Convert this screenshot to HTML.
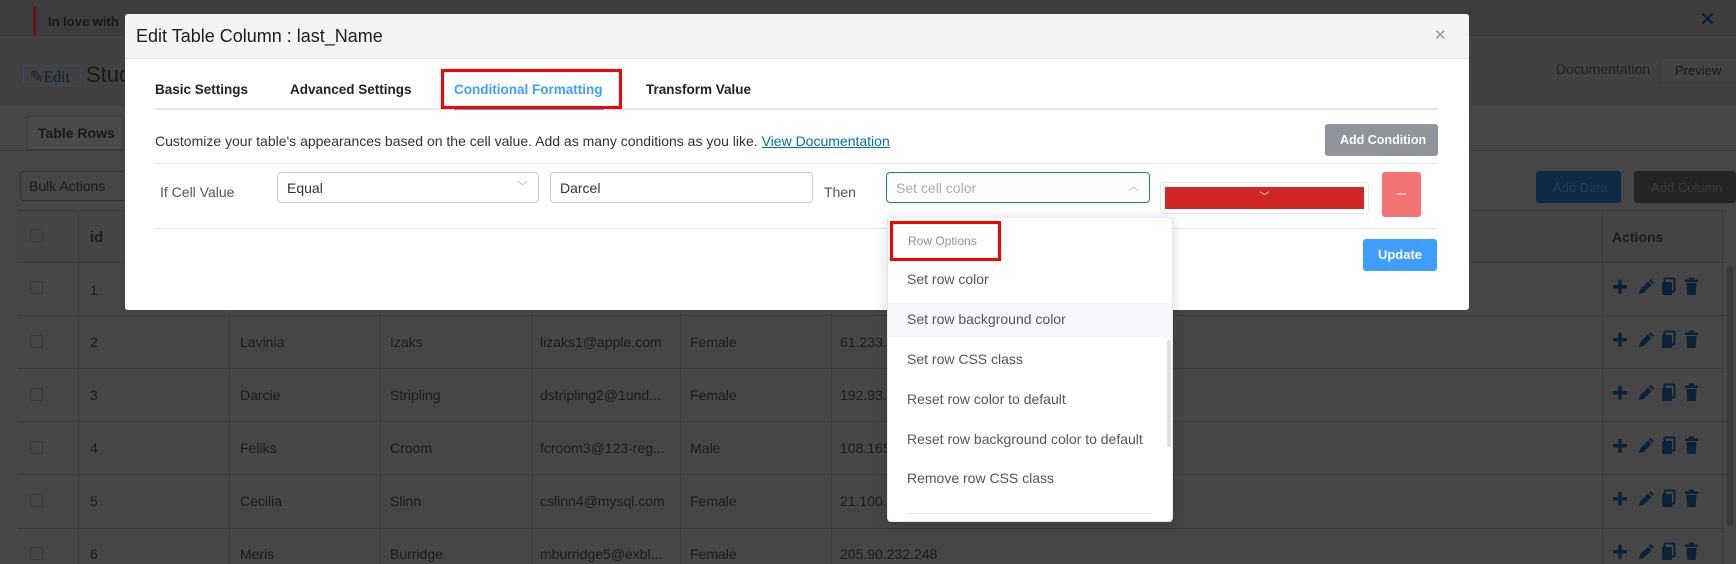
<!DOCTYPE html>
<html><head><meta charset="utf-8"><style>
*{box-sizing:border-box;margin:0;padding:0}
body{width:1736px;height:564px;overflow:hidden;background:#464646;font-family:"Liberation Sans",Arial,sans-serif;position:relative;color:#1e1e1e}
.a{position:absolute}
.t{position:absolute;font-size:14px;color:#1c1c1c;white-space:nowrap}
.hl{position:absolute;left:18px;right:10px;height:1px;background:#3c3c3c}
.vl{position:absolute;top:210px;bottom:0;width:1px;background:#3c3c3c}
.cb{position:absolute;left:30px;width:13px;height:13px;border:1px solid #3a3a3a;border-radius:2px}
.ic{position:absolute;left:1613px}
.m{position:absolute;left:125px;top:14px;width:1344px;height:296px;background:#fff;border-radius:3px}
.sel{position:absolute;border:1px solid #c8cbd1;border-radius:4px;height:31px;font-size:14px;color:#333;padding:7px 9px}
.dd{position:absolute;left:887px;top:217px;width:286px;height:305px;background:#fff;border:1px solid #e4e7ed;border-radius:4px;box-shadow:0 2px 12px rgba(0,0,0,.15)}
.it{position:absolute;left:19px;font-size:14px;color:#555}
.tab{position:absolute;top:68px;font-size:13.5px;font-weight:bold;color:#222;white-space:nowrap}
</style></head><body>
<svg width="0" height="0" style="position:absolute">
<defs>
<g id="icons" fill="#0c2238">
<rect x="0" y="8" width="14" height="3.5"/><rect x="5.25" y="2.7" width="3.5" height="14"/>
<path d="M26 17 L27 12.5 L35 4.5 L38.5 8 L30.5 16 Z M36 3.5 L37.5 2 L41 5.5 L39.5 7 Z"/>
<rect x="49" y="5" width="10" height="13" rx="1"/><rect x="51.5" y="1.5" width="10" height="13" rx="1" fill="none" stroke="#0c2238" stroke-width="2"/>
<rect x="72" y="2.5" width="13" height="2.5"/><rect x="76" y="0.5" width="5" height="3"/><path d="M73.5 6 H83.5 L82.7 18 H74.3 Z"/>
</g></defs></svg>
<!-- background page -->
<div class="a" style="left:0;top:0;width:1736px;height:36px;background:#3d3d3d;border-bottom:1px solid #383838"></div>
<div class="a" style="left:33px;top:6px;width:3px;height:29px;background:#6b1515"></div>
<div class="t" style="left:48px;top:14px;font-size:13px;font-weight:bold;color:#1a1a1a">In love with</div>
<div class="t" style="left:1700px;top:9px;font-size:18px;font-weight:bold;color:#0c2238">✕</div>
<div class="a" style="left:0;top:36px;width:1736px;height:70px;background:#414141"></div>
<div class="a" style="left:23px;top:65px;width:58px;height:21px;border:1px solid #3a4a5a;border-radius:2px"></div>
<div class="t" style="left:30px;top:67px;font-family:'Liberation Serif',serif;font-size:16px;color:#0c2238">✎Edit</div>
<div class="t" style="left:86px;top:62px;font-size:22px;color:#1a1a1a">Stud</div>
<div class="t" style="left:1556px;top:61px;font-size:14px;color:#222">Documentation</div>
<div class="a" style="left:1660px;top:57px;width:80px;height:26px;border:1px solid #3c3c3c;background:#434343"></div>
<div class="t" style="left:1675px;top:63px;font-size:13px;color:#1a1a1a">Preview</div>
<div class="a" style="left:27px;top:116px;width:96px;height:34px;background:#4a4a4a;border:1px solid #3c3c3c"></div>
<div class="t" style="left:38px;top:125px;font-weight:bold;color:#1a1a1a">Table Rows</div>
<div class="a" style="left:0;top:150px;width:1736px;height:1px;background:#3c3c3c"></div>
<div class="a" style="left:20px;top:171px;width:110px;height:30px;border:1px solid #333;border-radius:3px"></div>
<div class="t" style="left:29px;top:178px">Bulk Actions</div>
<div class="a" style="left:1536px;top:171px;width:85px;height:32px;background:#0f2a47;border-radius:3px"></div>
<div class="t" style="left:1553px;top:180px;font-size:13px;color:#2a3b4e">Add Data</div>
<div class="a" style="left:1634px;top:171px;width:102px;height:32px;background:#242424;border-radius:3px"></div>
<div class="t" style="left:1651px;top:180px;font-size:13px;color:#3a3a3a">Add Column</div>
<div class="a" style="left:18px;top:210px;width:1708px;height:52px;background:#454545"></div>
<div class="hl" style="top:210px"></div><div class="hl" style="top:262px"></div><div class="hl" style="top:315px"></div><div class="hl" style="top:368px"></div><div class="hl" style="top:421px"></div><div class="hl" style="top:474px"></div><div class="hl" style="top:528px"></div>
<div class="vl" style="left:78px"></div><div class="vl" style="left:229px"></div><div class="vl" style="left:380px"></div><div class="vl" style="left:532px"></div><div class="vl" style="left:680px"></div><div class="vl" style="left:831px"></div><div class="vl" style="left:1602px"></div><div class="vl" style="left:1722px"></div>
<div class="a" style="left:1727px;top:266px;width:6px;height:260px;background:#3a3a3a;border-radius:3px"></div>
<div class="cb" style="top:229px"></div>
<div class="t" style="left:90px;top:229px;font-weight:bold;font-size:15px">id</div>
<div class="t" style="left:1612px;top:229px;font-weight:bold">Actions</div>
<div class="cb" style="top:281px"></div><div class="t" style="left:90px;top:282px">1</div>
<div class="cb" style="top:335px"></div><div class="t" style="left:90px;top:334px">2</div><div class="t" style="left:240px;top:334px">Lavinia</div><div class="t" style="left:390px;top:334px">Izaks</div><div class="t" style="left:540px;top:334px">lizaks1@apple.com</div><div class="t" style="left:690px;top:334px">Female</div><div class="t" style="left:840px;top:334px">61.233.</div>
<div class="cb" style="top:388px"></div><div class="t" style="left:90px;top:387px">3</div><div class="t" style="left:240px;top:387px">Darcie</div><div class="t" style="left:390px;top:387px">Stripling</div><div class="t" style="left:540px;top:387px">dstripling2@1und...</div><div class="t" style="left:690px;top:387px">Female</div><div class="t" style="left:840px;top:387px">192.93.</div>
<div class="cb" style="top:441px"></div><div class="t" style="left:90px;top:440px">4</div><div class="t" style="left:240px;top:440px">Feliks</div><div class="t" style="left:390px;top:440px">Croom</div><div class="t" style="left:540px;top:440px">fcroom3@123-reg...</div><div class="t" style="left:690px;top:440px">Male</div><div class="t" style="left:840px;top:440px">108.165</div>
<div class="cb" style="top:494px"></div><div class="t" style="left:90px;top:493px">5</div><div class="t" style="left:240px;top:493px">Cecilia</div><div class="t" style="left:390px;top:493px">Slinn</div><div class="t" style="left:540px;top:493px">cslinn4@mysql.com</div><div class="t" style="left:690px;top:493px">Female</div><div class="t" style="left:840px;top:493px">21.100.</div>
<div class="cb" style="top:547px"></div><div class="t" style="left:90px;top:546px">6</div><div class="t" style="left:240px;top:546px">Meris</div><div class="t" style="left:390px;top:546px">Burridge</div><div class="t" style="left:540px;top:546px">mburridge5@exbl...</div><div class="t" style="left:690px;top:546px">Female</div><div class="t" style="left:840px;top:546px">205.90.232.248</div>
<svg class="ic" style="top:277px" width="90" height="20"><use href="#icons"/></svg>
<svg class="ic" style="top:330px" width="90" height="20"><use href="#icons"/></svg>
<svg class="ic" style="top:383px" width="90" height="20"><use href="#icons"/></svg>
<svg class="ic" style="top:436px" width="90" height="20"><use href="#icons"/></svg>
<svg class="ic" style="top:489px" width="90" height="20"><use href="#icons"/></svg>
<svg class="ic" style="top:542px" width="90" height="20"><use href="#icons"/></svg>

<!-- modal -->
<div class="m">
 <div class="a" style="left:0;top:0;width:1344px;height:45px;background:#f4f4f4;border-bottom:1px solid #e2e2e2;border-radius:3px 3px 0 0"></div>
 <div class="t" style="left:11px;top:12px;font-size:18px;color:#1e1e1e">Edit Table Column : last_Name</div>
 <div class="t" style="left:1309px;top:12px;font-size:15px;color:#999">✕</div>
 <div class="tab" style="left:30px">Basic Settings</div>
 <div class="tab" style="left:165px">Advanced Settings</div>
 <div class="tab" style="left:329px;color:#409eff">Conditional Formatting</div>
 <div class="tab" style="left:521px">Transform Value</div>
 <div class="a" style="left:30px;top:94px;width:1283px;height:2px;background:#e4e7ed"></div>
 <div class="a" style="left:329px;top:94px;width:150px;height:2px;background:#409eff"></div>
 <div class="a" style="left:316px;top:55px;width:181px;height:40px;border:3px solid #f00"></div>
 <div class="t" style="left:30px;top:119px;font-size:14px;color:#333">Customize your table's appearances based on the cell value. Add as many conditions as you like. <span style="color:#0073aa;text-decoration:underline">View Documentation</span></div>
 <div class="a" style="left:1200px;top:110px;width:113px;height:32px;background:#909399;border-radius:3px"></div>
 <div class="t" style="left:1215px;top:119px;font-size:12.5px;font-weight:bold;color:#fff">Add Condition</div>
 <div class="a" style="left:30px;top:149px;width:1283px;height:1px;background:#e4e7ed"></div>
 <div class="t" style="left:35px;top:170px;color:#555">If Cell Value</div>
 <div class="sel" style="left:152px;top:158px;width:262px">Equal<span style="position:absolute;right:10px;top:5px;color:#bbb;font-size:11px">﹀</span></div>
 <div class="sel" style="left:425px;top:158px;width:263px">Darcel</div>
 <div class="t" style="left:699px;top:170px;color:#555">Then</div>
 <div class="sel" style="left:761px;top:158px;width:264px;border-color:#1e78d0;color:#aaa">Set cell color<span style="position:absolute;right:10px;top:5px;color:#bbb;font-size:11px">︿</span></div>
 <div class="a" style="left:1035px;top:168px;width:209px;height:32px;border:1px solid #e4e7ed;border-radius:3px;background:#fff"></div>
 <div class="a" style="left:1040px;top:173px;width:199px;height:22px;background:#d02626;color:#fff;font-size:10px;text-align:center;line-height:22px">﹀</div>
 <div class="a" style="left:1257px;top:158px;width:39px;height:45px;background:#f47373;border-radius:3px;color:#fff;text-align:center;line-height:43px">–</div>
 <div class="a" style="left:30px;top:214px;width:1283px;height:1px;background:#e4e7ed"></div>
 <div class="a" style="left:1238px;top:225px;width:74px;height:32px;background:#409eff;border-radius:3px;color:#fff;font-size:13px;font-weight:bold;text-align:center;line-height:32px">Update</div>
</div>
<!-- dropdown -->
<div class="dd">
 <div class="it" style="left:20px;top:16px;font-size:12px;color:#909399">Row Options</div>
 <div class="a" style="left:2px;top:3px;width:111px;height:40px;border:3px solid #f00"></div>
 <div class="it" style="top:53px">Set row color</div>
 <div class="a" style="left:0;top:85px;width:284px;height:34px;background:#f5f7fa"></div>
 <div class="it" style="top:93px">Set row background color</div>
 <div class="it" style="top:133px">Set row CSS class</div>
 <div class="it" style="top:173px">Reset row color to default</div>
 <div class="it" style="top:213px">Reset row background color to default</div>
 <div class="it" style="top:252px">Remove row CSS class</div>
 <div class="a" style="left:19px;top:295px;width:245px;height:1px;background:#e4e7ed"></div>
 <div class="a" style="left:279px;top:122px;width:4px;height:107px;background:#dcdfe6;border-radius:2px"></div>
</div>
</body></html>
